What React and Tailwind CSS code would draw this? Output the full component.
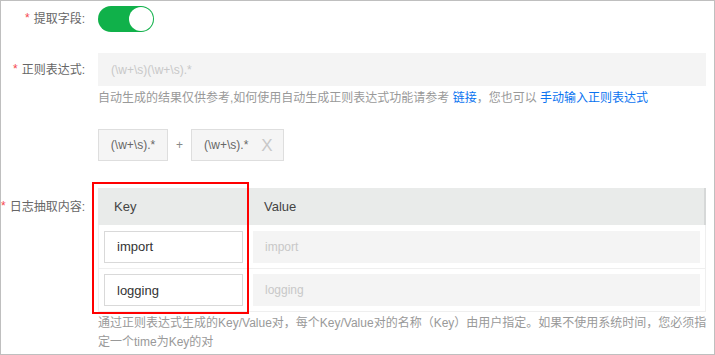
import React, { useState } from 'react';

const FONT = { fontFamily: '"Liberation Sans", "Noto Sans CJK SC", sans-serif' };

function Label({ children }) {
  return (
    <div className="w-[85px] shrink-0 text-right text-[12px] leading-[18px] text-[#666] whitespace-nowrap pr-[1px]">
      <span className="text-[#f5474f] mr-[4px] relative top-[-1px]">*</span>
      {children}
    </div>
  );
}

function Switch({ on, onToggle }) {
  return (
    <button
      onClick={onToggle}
      className={`relative block w-[56px] h-[26px] rounded-full ${on ? 'bg-[#10b14a]' : 'bg-[#ccc]'}`}
    >
      <span
        className={`absolute top-[1px] w-[24px] h-[24px] rounded-full bg-white ${on ? 'right-[1px]' : 'left-[1px]'}`}
      />
    </button>
  );
}

const rows = [
  { key: 'import', value: 'import' },
  { key: 'logging', value: 'logging' },
];

export default function App() {
  const [on, setOn] = useState(true);

  return (
    <div style={FONT} className="w-[715px] h-[355px] border border-[#bfbfbf] bg-white overflow-hidden relative">
      {/* 提取字段 */}
      <div className="flex items-center mt-[5px] h-[26px]">
        <Label>提取字段:</Label>
        <div className="ml-[12px] flex">
          <Switch on={on} onToggle={() => setOn(!on)} />
        </div>
      </div>

      {/* 正则表达式 */}
      <div className="flex items-center mt-[21px] h-[33px]">
        <Label>正则表达式:</Label>
        <div className="ml-[12px] w-[608px] h-[33px] bg-[#f4f4f4] flex items-center px-[13px] text-[12px] text-[#c8c8c8]">
          (\w+\s)(\w+\s).*
        </div>
      </div>
      <div className="ml-[97px] h-[22px] leading-[22px] text-[12px] text-[#999] mt-[1px]">
        自动生成的结果仅供参考,如何使用自动生成正则表达式功能请参考 <span className="text-[#0a73f0]">链接</span>，您也可以 <span className="text-[#0a73f0]">手动输入正则表达式</span>
      </div>

      {/* pills */}
      <div className="ml-[97px] mt-[20px] h-[32px] flex items-center text-[12px] text-[#666]">
        <div className="h-[32px] w-[70px] border border-[#dedede] bg-[#f5f5f5] flex items-center justify-center">
          (\w+\s).*
        </div>
        <span className="w-[23px] text-center text-[#888]">+</span>
        <div className="h-[32px] w-[93px] border border-[#dedede] bg-[#f5f5f5] flex items-center pl-[12px]">
          <span>(\w+\s).*</span>
          <span className="ml-[13px] text-[17px] text-[#c8c8c8] leading-none">X</span>
        </div>
      </div>

      {/* 日志抽取内容 */}
      <div className="flex mt-[27px]">
        <div className="h-[37px] flex items-center">
          <Label>日志抽取内容:</Label>
        </div>
        <div className="ml-[12px] w-[608px]">
          <div className="flex h-[37px] bg-[#e9ebea] border-r-2 border-[#d6d8d8] text-[13px] text-[#444]">
            <div className="w-[150px] flex items-center pl-[16px]">Key</div>
            <div className="flex-1 flex items-center pl-[16px]">Value</div>
          </div>
          <div className="border border-t-0 border-[#efefef]">
            {rows.map((r, i) => (
              <div
                key={r.key}
                className={`flex items-center h-[43px] ${i > 0 ? 'border-t border-[#efefef]' : ''}`}
              >
                <div className="w-[150px] pl-[5px] pr-[6px] flex">
                  <input
                    defaultValue={r.key}
                    className="block w-full h-[32px] border border-[#d9d9d9] bg-white px-[12px] text-[13px] text-[#333] outline-none"
                  />
                </div>
                <div className="flex-1 pl-[4px] pr-[5px]">
                  <div className="h-[32px] bg-[#f4f4f4] flex items-center px-[12px] text-[12px] text-[#c8c8c8]">
                    {r.value}
                  </div>
                </div>
              </div>
            ))}
          </div>
        </div>
      </div>

      <div className="ml-[97px] w-[610px] mt-[2px] text-[12px] leading-[19px] text-[#999]">
        通过正则表达式生成的Key/Value对，每个Key/Value对的名称（Key）由用户指定。如果不使用系统时间，您必须指定一个time为Key的对
      </div>

      {/* red annotation box */}
      <div className="absolute left-[91px] top-[181px] w-[157px] h-[132px] border-2 border-[#ff0000] pointer-events-none" />
    </div>
  );
}
